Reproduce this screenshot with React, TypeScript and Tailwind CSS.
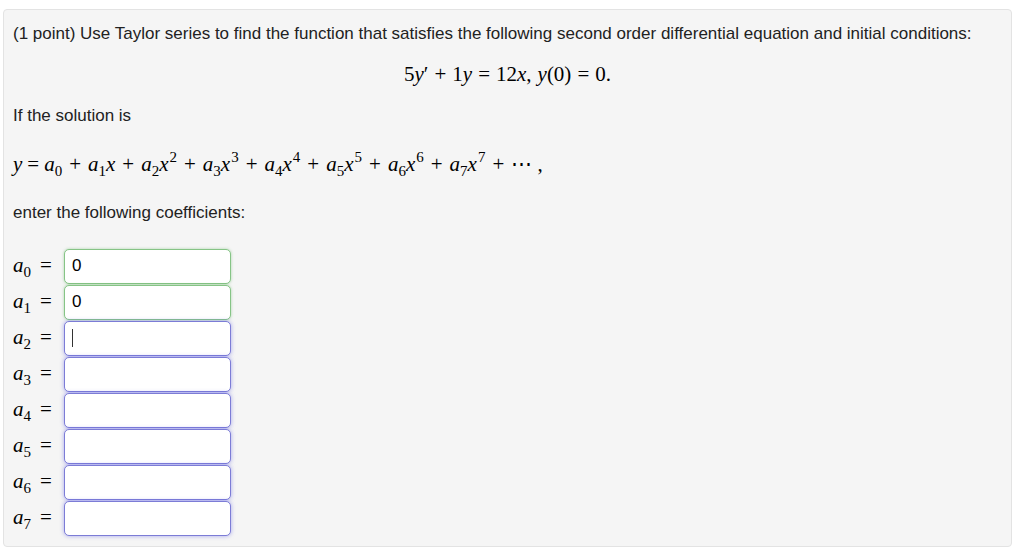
import React from "react";

const serif = { fontFamily: '"Liberation Serif", "Times New Roman", serif' };

function A({ n }: { n: number }) {
  return (
    <span className="whitespace-nowrap">
      <i>a</i>
      <span className="relative top-[5px] text-[15px] leading-none">{n}</span>
    </span>
  );
}
function X({ p }: { p?: number }) {
  return (
    <span className="whitespace-nowrap">
      <i>x</i>
      {p !== undefined && <span className="relative top-[-9px] ml-[1px] text-[15px] leading-none">{p}</span>}
    </span>
  );
}
const Plus = () => <span className="mx-[7px]">+</span>;

export default function App() {
  const rows = [
    { v: "0", ok: true },
    { v: "0", ok: true },
    { v: "", ok: false, caret: true },
    { v: "", ok: false },
    { v: "", ok: false },
    { v: "", ok: false },
    { v: "", ok: false },
    { v: "", ok: false },
  ];
  return (
    <div className="w-[1024px] h-[557px] bg-white pt-[9px] pl-[3px]" style={{ fontFamily: '"Liberation Sans", Arial, sans-serif' }}>
      <div className="w-[1009px] h-[538px] bg-[#f5f5f5] border border-[#e3e3e3] rounded-[4px] pt-[14px] pl-[9px] text-[17px] text-[#222]">
        <div className="leading-[20px]">
          (1 point) Use Taylor series to find the function that satisfies the following second order differential equation and initial conditions:
        </div>
        <div className="mt-[20px] leading-[20px] text-[21px] text-center pr-[9px] text-black whitespace-nowrap" style={serif}>
          5<i>y</i>′<span className="mx-[6px]">+</span>1<i>y</i><span className="mx-[6px]">=</span>12<i>x</i>,<span className="ml-[6px]"><i>y</i>(0)</span><span className="mx-[6px]">=</span>0.
        </div>
        <div className="mt-[22px] leading-[20px]">If the solution is</div>
        <div className="mt-[27px] leading-[22px] text-[21px] text-black whitespace-nowrap" style={serif}>
          <i>y</i><span className="mx-[5px]">=</span><A n={0} /><Plus /><A n={1} /><X /><Plus /><A n={2} /><X p={2} /><Plus /><A n={3} /><X p={3} /><Plus /><A n={4} /><X p={4} /><Plus /><A n={5} /><X p={5} /><Plus /><A n={6} /><X p={6} /><Plus /><A n={7} /><X p={7} /><Plus />⋯ ,
        </div>
        <div className="mt-[28px] leading-[20px]">enter the following coefficients:</div>
        <div className="mt-[25px] flex flex-col">
          {rows.map((r, i) => (
            <div key={i} className="flex items-center h-[36px]">
              <div className="w-[51px] text-[21px] text-black flex items-center" style={serif}>
                <A n={i} />
                <span className="ml-[9px]">=</span>
              </div>
              <div
                className={
                  "w-[167px] h-[35px] rounded-[5px] bg-white border flex items-center pl-[7px] text-[17px] text-black " +
                  (r.ok
                    ? "border-[#86c486] shadow-[0_0_3px_rgba(80,170,80,0.45)]"
                    : "border-[#7c7cd6] shadow-[0_0_4px_rgba(100,100,230,0.55)]")
                }
              >
                {r.v}
                {r.caret && <span className="inline-block w-[1px] h-[18px] bg-[#333]" />}
              </div>
            </div>
          ))}
        </div>
      </div>
    </div>
  );
}
